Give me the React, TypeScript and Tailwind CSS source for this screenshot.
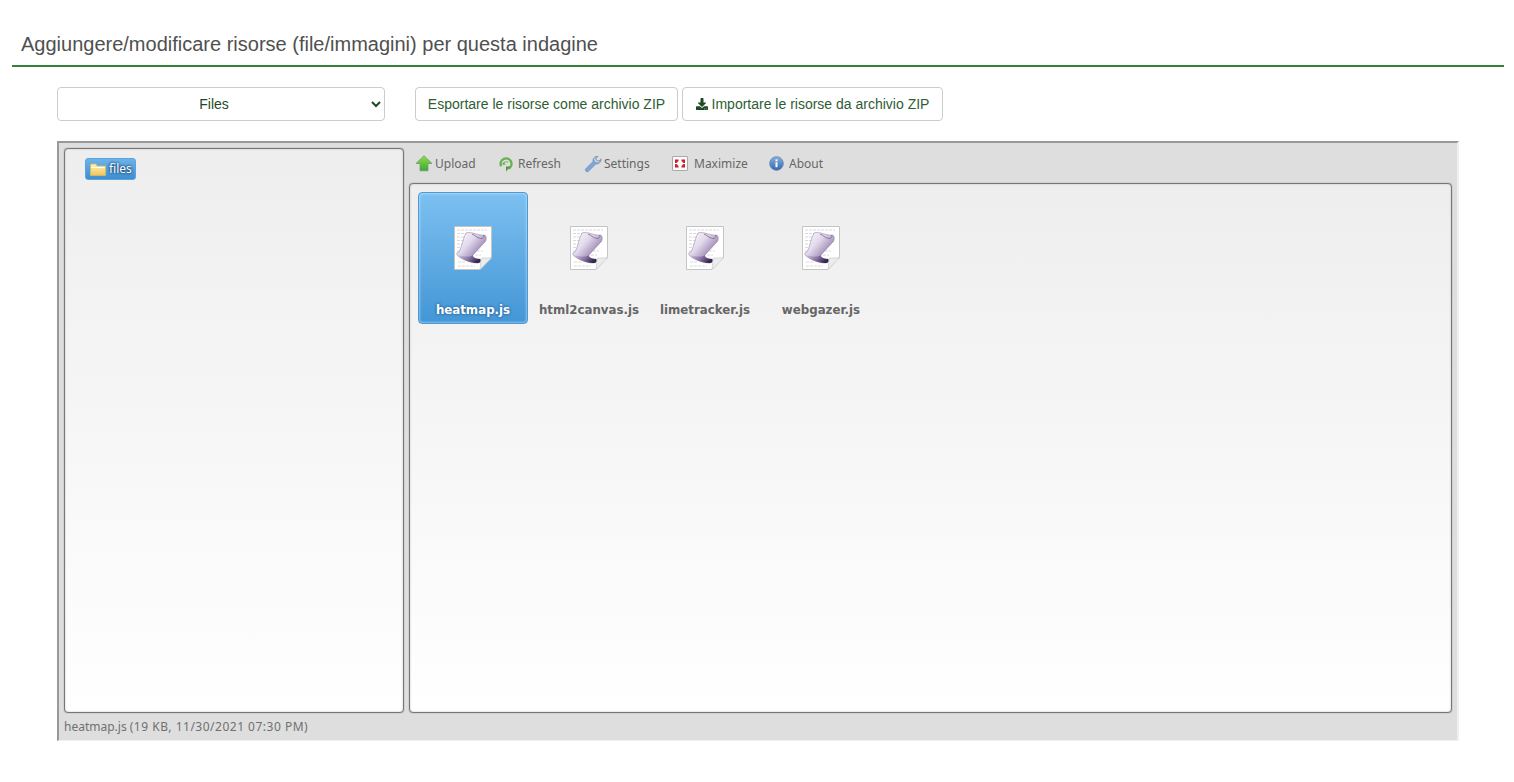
import React from "react";
import { FaDownload } from "react-icons/fa";

function DocIcon({ id }: { id: string }) {
  return (
    <svg width="40" height="46" viewBox="0 0 40 46" className="block">
      <defs>
        <linearGradient id={id} x1="0" y1="0" x2="1" y2="0.9">
          <stop offset="0" stopColor="#ffffff" />
          <stop offset="0.4" stopColor="#e2d9ec" />
          <stop offset="0.7" stopColor="#a592bb" />
          <stop offset="1" stopColor="#5a4878" />
        </linearGradient>
        <linearGradient id={`${id}b`} x1="0" y1="0" x2="1" y2="0.3">
          <stop offset="0" stopColor="#d5cae2" />
          <stop offset="0.55" stopColor="#8c78a6" />
          <stop offset="1" stopColor="#352650" />
        </linearGradient>
      </defs>
      <path d="M1.5 1.5H38.5V32L27 44.5H1.5Z" fill="#ffffff" stroke="#c4c4c4" strokeWidth="1" />
      <g stroke="#cfcfcf" strokeWidth="0.8" strokeDasharray="3 1">
        <path d="M4 5H34M4 8.5H14M4 12H11M4 15.5H10M4 19H9M4 22.5H8M4 26H6M24 26H30M22 30H28M5 37H12M5 41H22" />
      </g>
      <path d="M13 8C18 6 26 11 31 10C34 10 34 16 31 18L20 30C19 32 22 34 27 34C29 36 27 38 24 38C17 38 8 34 4 30C3 28 5 27 6 27C9 22 10 13 13 8Z" fill={`url(#${id})`} stroke="#8a779f" strokeWidth="0.5" />
      <path d="M4 30C9 31 16 33 20 30C19 32 22 34 27 34C29 36 27 38 24 38C17 38 8 34 4 30Z" fill={`url(#${id}b)`} />
      <path d="M19 9C22 10 24 13 28 13.5C30 13.7 31 12 31 10" fill="none" stroke="#77648f" strokeWidth="0.8" />
      <path d="M27 44.5L28 34C28 33.5 28.5 33 29 33H38.5Z" fill="#ececec" stroke="#c4c4c4" strokeWidth="0.6" />
    </svg>
  );
}

function UploadIcon() {
  return (
    <svg width="18" height="17" viewBox="0 0 18 17" className="shrink-0">
      <defs>
        <linearGradient id="up" x1="0" y1="0" x2="0" y2="1">
          <stop offset="0" stopColor="#8fe040" />
          <stop offset="1" stopColor="#3ca838" />
        </linearGradient>
      </defs>
      <path d="M9 0.8L17 8.5H13V15.8H5V8.5H1Z" fill="url(#up)" stroke="#6f9c6f" strokeWidth="0.8" />
    </svg>
  );
}

function RefreshIcon() {
  return (
    <svg width="16" height="16" viewBox="0 0 16 16" className="shrink-0">
      <path d="M3.2 10.2A5.4 5.4 0 1 1 10.6 12.6" fill="none" stroke="#6ab055" strokeWidth="2.4" />
      <path d="M8 10.4L12.5 10.4L8 15.4Z" fill="#4f9a3f" />
      <path d="M6 8A2.2 2.2 0 0 1 10 6.6" fill="none" stroke="#8ccc70" strokeWidth="1.4" />
      <path d="M5 6.6L8 8.5H4.4Z" fill="#4f9a3f" />
    </svg>
  );
}

function WrenchIcon() {
  return (
    <svg width="18" height="18" viewBox="0 0 18 18" className="shrink-0">
      <path d="M1.5 14L9 6.5C8.5 3.5 11 1 14 1.4L11.8 3.8L13 5.8L15.2 6L17 3.8C17.6 7 14.5 9.5 11.8 9L4.2 16.5C3 17.6 0.5 15.6 1.5 14Z" fill="#7fa6dc" stroke="#6d8cbc" strokeWidth="0.7" />
      <path d="M10.5 1.8L12 1.4L11 3.4L12.8 6L15.5 6.2L14.8 7.5L12 7.2L10 4.8Z" fill="#e8e8e8" stroke="#9a9a9a" strokeWidth="0.5" />
    </svg>
  );
}

function MaxIcon() {
  return (
    <svg width="16" height="15" viewBox="0 0 16 15" className="shrink-0">
      <rect x="0.5" y="0.5" width="15" height="14" rx="0.5" fill="#fbfbfb" stroke="#a8a8a8" />
      <path d="M3 3.5H6.5V5L4.5 7H3ZM13 3.5H9.5V5L11.5 7H13ZM3 11.5H6.5V10L4.5 8H3ZM13 11.5H9.5V10L11.5 8H13Z" fill="#cc1f2e" />
    </svg>
  );
}

function AboutIcon() {
  return (
    <svg width="15" height="15" viewBox="0 0 15 15" className="shrink-0">
      <defs>
        <linearGradient id="ab" x1="0" y1="0" x2="0" y2="1">
          <stop offset="0" stopColor="#8ab0dc" />
          <stop offset="1" stopColor="#2f68b0" />
        </linearGradient>
      </defs>
      <circle cx="7.5" cy="7.5" r="6.8" fill="url(#ab)" stroke="#5a7fae" strokeWidth="0.8" />
      <rect x="6.5" y="6.2" width="2" height="5" fill="#ffffff" />
      <rect x="6.5" y="3.4" width="2" height="1.8" fill="#ffffff" />
    </svg>
  );
}

function FolderIcon() {
  return (
    <svg width="16" height="13" viewBox="0 0 16 13" className="shrink-0">
      <defs>
        <linearGradient id="fo" x1="0" y1="0" x2="0" y2="1">
          <stop offset="0" stopColor="#fff2b8" />
          <stop offset="1" stopColor="#efc65a" />
        </linearGradient>
      </defs>
      <path d="M0.5 2V12.5H15.5V3H7L6 1H1Z" fill="url(#fo)" stroke="#d9b768" strokeWidth="0.8" />
      <path d="M1.5 4.5H14.5" stroke="#ffffff" strokeWidth="1" />
    </svg>
  );
}

const tools = [
  { label: "Upload", icon: <UploadIcon />, gap: "gap-[2px]", w: "w-[83px]" },
  { label: "Refresh", icon: <RefreshIcon />, gap: "gap-[4px]", w: "w-[86px]" },
  { label: "Settings", icon: <WrenchIcon />, gap: "gap-[2px]", w: "w-[88px]" },
  { label: "Maximize", icon: <MaxIcon />, gap: "gap-[6px]", w: "w-[97px]" },
  { label: "About", icon: <AboutIcon />, gap: "gap-[5px]", w: "w-auto" },
];

const files = ["heatmap.js", "html2canvas.js", "limetracker.js", "webgazer.js"];

export default function App() {
  return (
    <div className="h-[782px] overflow-hidden bg-white font-['Liberation_Sans',Arial,sans-serif]">
      <div className="mr-[10px] ml-[12px] border-b-2 border-[#38803a] pt-[34px] pb-[10px] pl-[9px]">
        <h1 className="text-[20px] leading-[21px] font-normal text-[#505050]">
          Aggiungere/modificare risorse (file/immagini) per questa indagine
        </h1>
      </div>

      <div className="mt-[20px] ml-[57px] flex h-[34px] items-stretch">
        <select className="h-[34px] w-[328px] rounded-[4px] border border-[#cccccc] bg-white pr-[14px] pl-[12px] text-center text-[14px] text-[#1f4a25]">
          <option>Files</option>
        </select>
        <button className="ml-[30px] h-[34px] w-[263px] rounded-[4px] border border-[#cccccc] bg-white text-[14px] text-[#2f5d33]">
          Esportare le risorse come archivio ZIP
        </button>
        <button className="ml-[4px] flex h-[34px] w-[261px] items-center justify-center gap-[4px] rounded-[4px] border border-[#cccccc] bg-white text-[14px] text-[#2f5d33]">
          <FaDownload className="text-[12px] text-[#1f4a25]" />
          Importare le risorse da archivio ZIP
        </button>
      </div>

      <div className="mt-[20px] ml-[57px] flex h-[600px] w-[1402px] flex-col border-t-2 border-r-2 border-b border-l-2 border-t-[#999999] border-r-[#efefef] border-b-[#efefef] border-l-[#999999] bg-[#dedede] pt-[5px] pr-[5px] pl-[5px] font-['Noto_Sans',sans-serif] text-[12px] text-[#666666]">
        <div className="flex min-h-0 flex-1 gap-[5px]">
          <aside className="h-[565px] w-[340px] shrink-0 rounded-[4px] border border-[#777777] bg-gradient-to-b from-[#eeeeee] to-[#ffffff] pt-[9px] pl-[20px] shadow-[0_0_1px_#555555,inset_0_0_2px_#bbbbbb]">
            <div className="flex h-[22px] w-[51px] items-center gap-[3px] rounded-[3px] border border-[#5aa4e0] bg-gradient-to-b from-[#6db3e8] to-[#3e8ed0] pl-[4px] text-[12px] text-white [text-shadow:0_0_2px_#123c68,0_0_3px_#123c68]">
              <FolderIcon />
              <span className="leading-none">files</span>
            </div>
          </aside>

          <div className="flex min-w-0 flex-1 flex-col">
            <div className="flex h-[35px] shrink-0 items-center pb-[4px] pl-[6px]">
              {tools.map((t) => (
                <div key={t.label} className={`flex shrink-0 items-center ${t.gap} ${t.w}`}>
                  {t.icon}
                  <span className="text-[12px] leading-none text-[#666666]">{t.label}</span>
                </div>
              ))}
            </div>
            <main className="flex h-[530px] flex-wrap content-start gap-x-[6px] rounded-[4px] border border-[#777777] bg-gradient-to-b from-[#eeeeee] to-[#ffffff] pt-[8px] pl-[8px] shadow-[0_0_1px_#555555,inset_0_0_2px_#bbbbbb]">
              {files.map((f, i) => (
                <div
                  key={f}
                  className={
                    i === 0
                      ? "flex h-[132px] w-[110px] flex-col items-center rounded-[4px] border border-[#4c9ad8] bg-gradient-to-b from-[#7cc0f0] to-[#4396d6] pt-[32px] shadow-[inset_0_0_3px_#d8ecfb]"
                      : "flex h-[132px] w-[110px] flex-col items-center pt-[33px]"
                  }
                >
                  <DocIcon id={`doc${i}`} />
                  <span
                    className={
                      i === 0
                        ? "mt-[32px] font-['DejaVu_Sans',sans-serif] text-[11.8px] leading-[15px] font-bold whitespace-nowrap text-white [text-shadow:0_0_3px_#17497a]"
                        : "mt-[32px] font-['DejaVu_Sans',sans-serif] text-[11.8px] leading-[15px] font-bold whitespace-nowrap text-[#666666]"
                    }
                  >
                    {f}
                  </span>
                </div>
              ))}
            </main>
          </div>
        </div>
        <div className="flex h-[26px] shrink-0 items-center whitespace-pre text-[12px] text-[#707070]">
          <span>heatmap.js </span>
          <span className="tracking-[0.5px]">(19 KB, 11/30/2021 07:30 PM)</span>
        </div>
      </div>
    </div>
  );
}
